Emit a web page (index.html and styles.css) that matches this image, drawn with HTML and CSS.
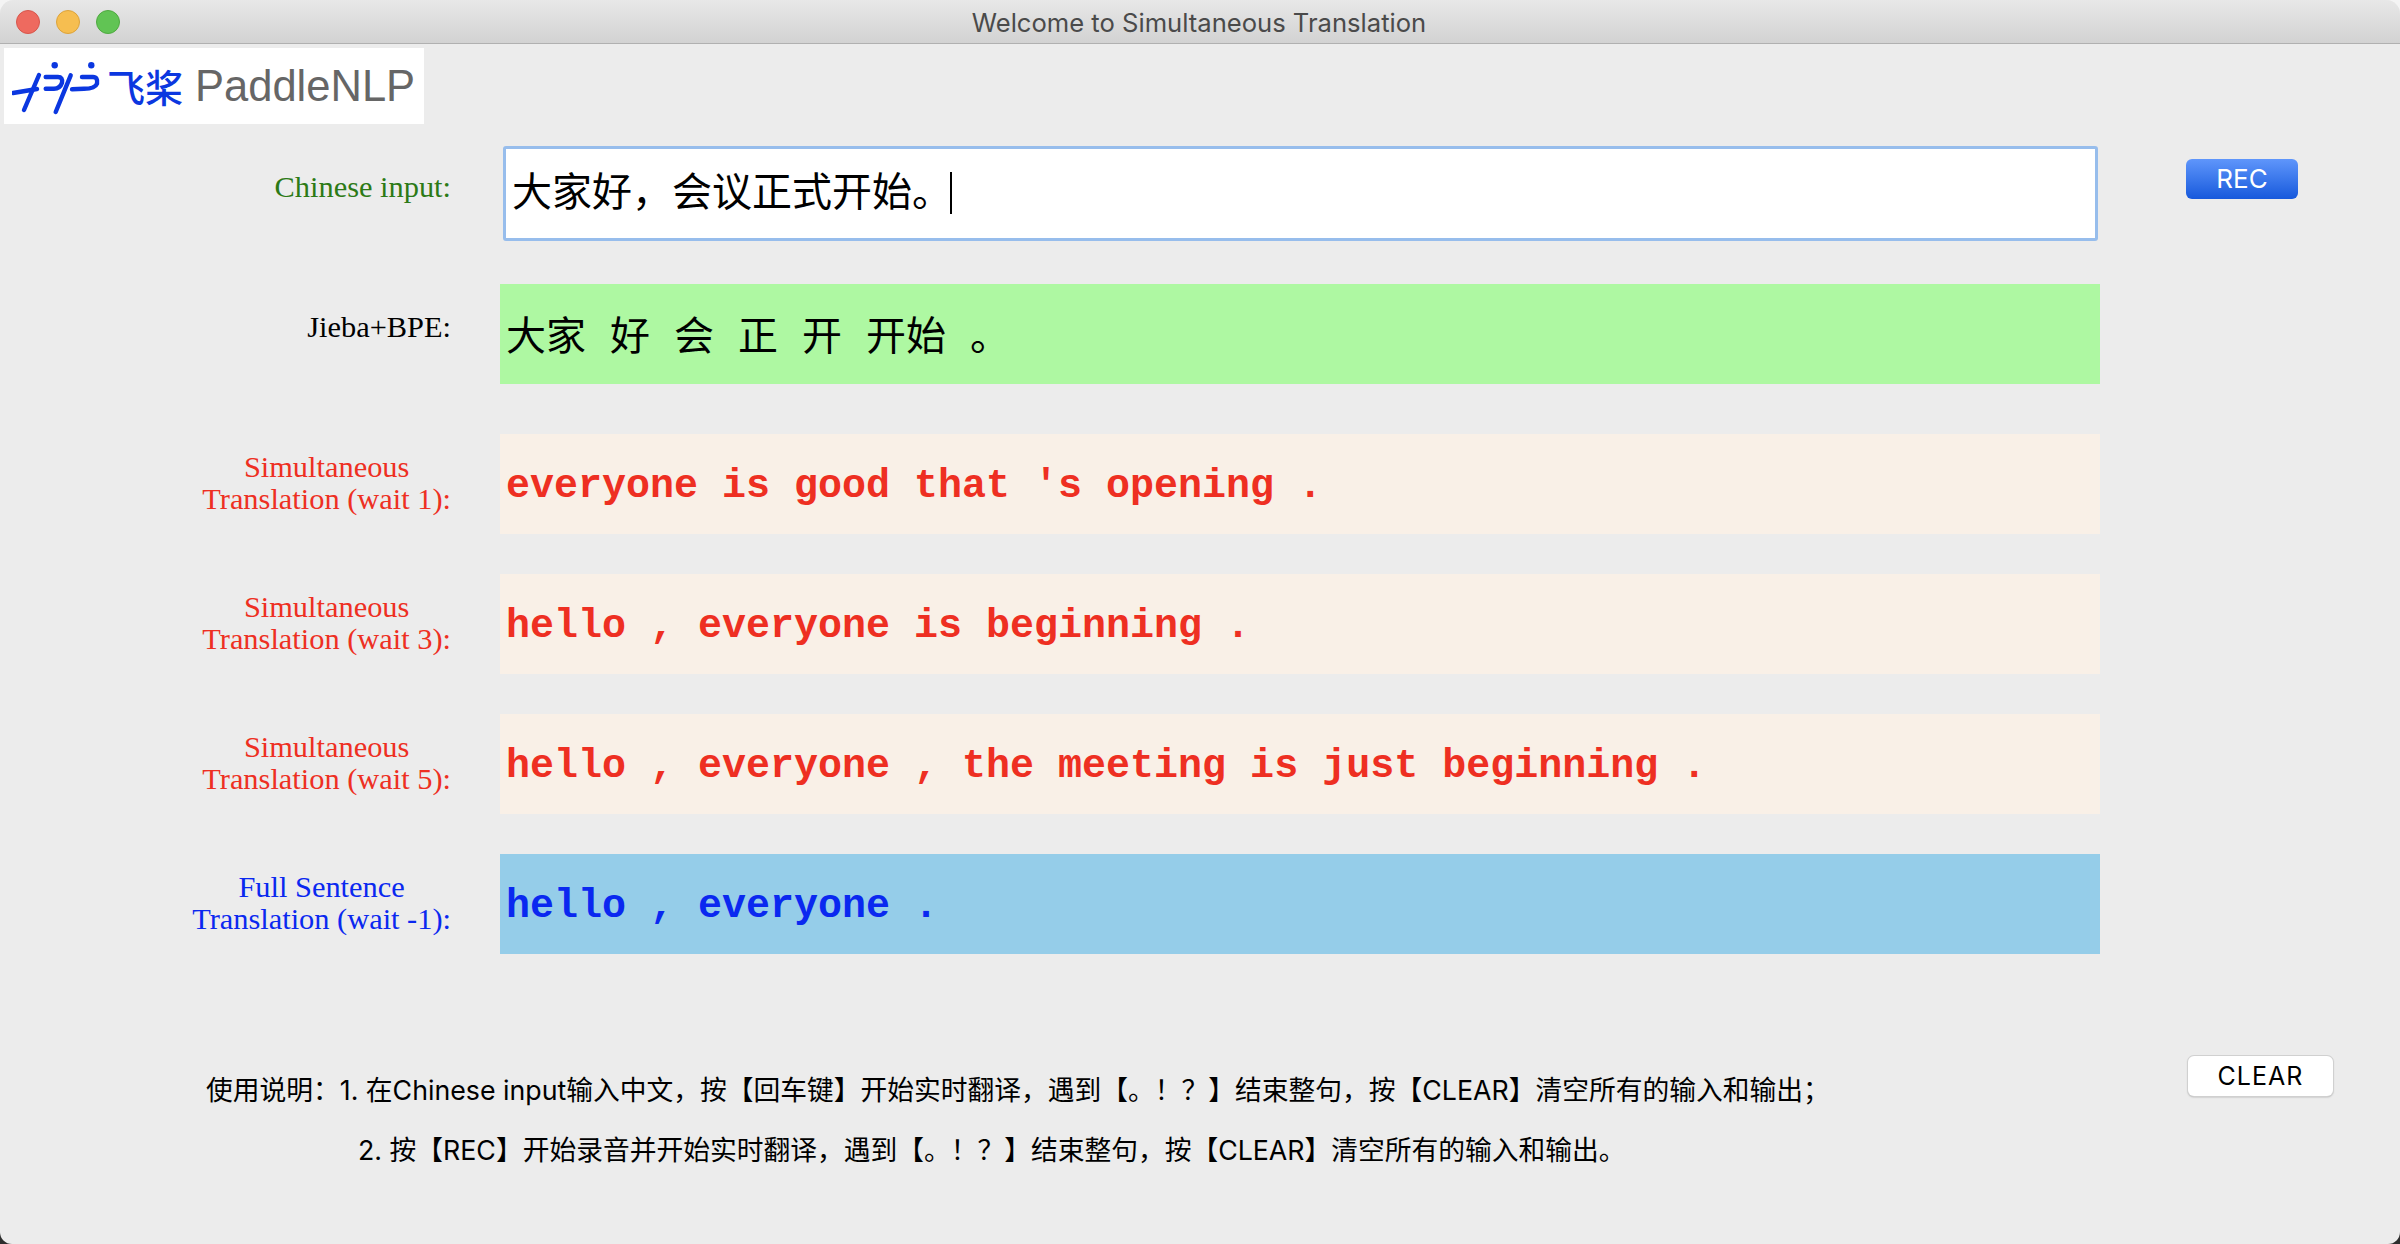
FILE: index.html
```html
<!DOCTYPE html>
<html lang="zh">
<head>
<meta charset="utf-8">
<title>Welcome to Simultaneous Translation</title>
<link rel="stylesheet" href="styles.css">
</head>
<body>
<div class="window">
  <header class="titlebar">
    <div class="lights">
      <span class="light red"></span>
      <span class="light yellow"></span>
      <span class="light green"></span>
    </div>
    <div class="title">Welcome to Simultaneous Translation</div>
  </header>
  <div class="logo">
    <svg class="mark" viewBox="0 0 90 56" width="90" height="56" fill="none" stroke="#0b37e0" stroke-width="4.4" stroke-linecap="round" stroke-linejoin="round">
      <path d="M1 33 L25 29"/>
      <path d="M27 15 L12 50"/>
      <circle cx="42.7" cy="5.3" r="3.2" fill="#0b37e0" stroke="none"/>
      <path d="M33.7 17 H46 Q51 17 50 22.7 Q48 28.7 42 28.7 H33.7"/>
      <path d="M58.7 15.3 L43.7 52"/>
      <circle cx="79.3" cy="5.3" r="3.2" fill="#0b37e0" stroke="none"/>
      <path d="M70 17 H81 Q86 17 85 23.7 Q83 28.7 72 28.7 L60 29.3"/>
    </svg>
    <span class="logo-cn">飞桨</span>
    <span class="logo-en">PaddleNLP</span>
  </div>
  <main class="form">
    <div class="row row-input">
      <label class="label green-text">Chinese input:</label>
      <div class="input"><span>大家好，会议正式开始。</span><i class="caret"></i></div>
      <button class="btn btn-rec">REC</button>
    </div>
    <div class="row row-seg">
      <label class="label">Jieba+BPE:</label>
      <div class="box box-green">大家 好 会 正 开 开始 。</div>
    </div>
    <div class="row">
      <label class="label red-text">Simultaneous<br>Translation (wait 1):</label>
      <div class="box box-peach mono">everyone is good that 's opening .</div>
    </div>
    <div class="row">
      <label class="label red-text">Simultaneous<br>Translation (wait 3):</label>
      <div class="box box-peach mono">hello , everyone is beginning .</div>
    </div>
    <div class="row">
      <label class="label red-text">Simultaneous<br>Translation (wait 5):</label>
      <div class="box box-peach mono">hello , everyone , the meeting is just beginning .</div>
    </div>
    <div class="row">
      <label class="label blue-text">Full Sentence<br>Translation (wait -1):</label>
      <div class="box box-blue mono">hello , everyone .</div>
    </div>
  </main>
  <footer class="help">
    <div class="help-text">
      <p class="help-one">使用说明：1. 在Chinese input输入中文，按【回车键】开始实时翻译，遇到【。！？】结束整句，按【CLEAR】清空所有的输入和输出；</p>
      <p class="help-two">2. 按【REC】开始录音并开始实时翻译，遇到【。！？】结束整句，按【CLEAR】清空所有的输入和输出。</p>
    </div>
    <button class="btn btn-clear">CLEAR</button>
  </footer>
</div>
</body>
</html>
```
FILE: styles.css
```css
* { box-sizing: border-box; }
html, body { margin: 0; height: 100%; }
body { width: 2400px; height: 1244px; overflow: hidden; background: linear-gradient(#f4f4f4 0 50%, #2e2e2e 50%); }
.window {
  width: 2400px; height: 1244px;
  background: #ececec;
  border-radius: 14px 14px 12px 12px;
  overflow: hidden;
  display: flex; flex-direction: column;
}
.titlebar {
  height: 44px; flex: none;
  background: linear-gradient(#e8e8e8, #d2d2d2);
  border-bottom: 1px solid #b0b0b0;
  display: flex; align-items: center;
  position: relative;
}
.lights { display: flex; gap: 16px; padding-left: 16px; }
.light { width: 24px; height: 24px; border-radius: 50%; display: block; }
.red { background: #ee6a5f; border: 1px solid #d7564c; }
.yellow { background: #f6be50; border: 1px solid #dca33b; }
.green { background: #61c454; border: 1px solid #4fa940; }
.title {
  flex: 1; text-align: center; margin-left: -122px; padding-top: 2px;
  font: 25.6px Inter, "Liberation Sans", Arial, sans-serif; color: #4a4a4a;
}
.logo {
  margin: 4px 0 0 4px; width: 420px; height: 76px; flex: none;
  background: #fff; display: flex; align-items: center; padding-left: 8px;
}
.mark { flex: none; margin-top: 4px; }
.logo-cn { font: 500 38px "Noto Sans CJK SC", sans-serif; color: #0b37e0; margin-left: 5px; line-height: 1; }
.logo-en { font: 43.5px "Liberation Sans", Arial, sans-serif; color: #666; margin-left: 12px; line-height: 1; padding-top: 2px; }
.form { display: flex; flex-direction: column; gap: 40px; margin-top: 22px; flex: none; }
.row { display: flex; align-items: center; height: 100px; position: relative; }
.row-input { margin-bottom: 3px; height: 95px; }
.row-seg { margin-bottom: 10px; }
.label {
  width: 451px; flex: none;
  font: 30.4px/32px "Liberation Serif", "Times New Roman", serif; color: #000;
  display: flex; justify-content: flex-end; text-align: center;
  margin-right: 49px;
}
.green-text { color: #2c7a16; margin-top: -14px; }
.red-text { color: #ee2f22; margin-top: -3px; }
.blue-text { color: #0a28f0; margin-top: -3px; }
.row-seg .label { margin-top: -14px; }
.box {
  width: 1600px; height: 100px; flex: none;
  display: flex; align-items: center; padding-left: 6px;
  font-size: 40px; color: #000; white-space: pre;
}
.box-green { background: #aef8a2; font-family: "Liberation Mono", "Noto Sans CJK SC", monospace; padding-bottom: 2px; }
.box-peach { background: #f9f0e7; color: #ee2f22; }
.box-blue { background: #95cde9; color: #0a28f0; }
.mono { font-family: "Liberation Mono", "Courier New", monospace; font-weight: 700; padding-top: 4px; }
.input {
  width: 1595px; height: 95px; flex: none; margin-left: 3px;
  background: #fff; border: 3px solid #97bdec; border-radius: 3px;
  display: flex; align-items: center; padding: 0 0 10px 6px;
  font: 40px "Noto Sans CJK SC", sans-serif; color: #000;
}
.caret { display: block; width: 2px; height: 42px; background: #000; margin-left: -2px; margin-top: 8px; }
.btn { font-family: Inter, "Liberation Sans", sans-serif; border: 0; padding: 0; display: block; }
.btn-rec {
  width: 112px; height: 40px; margin-left: 88px; margin-top: -30px; flex: none;
  border-radius: 6px; color: #fff; font-size: 26px;
  background: linear-gradient(#5f96fb, #1759dc);
}
.btn-clear {
  width: 145px; height: 40px; flex: none;
  background: #fff; border-radius: 6px; color: #000; font-size: 25px; letter-spacing: 1px;
  box-shadow: 0 0 0 1px #d0d0d0, 0 1px 2px #999;
  margin-top: -4px;
}
.help { display: flex; justify-content: space-between; padding: 106px 67px 0 206px; flex: none; }
.help-text { font: 26.75px Inter, "Noto Sans CJK SC", sans-serif; color: #000; white-space: nowrap; }
.help-text p { margin: 0; line-height: 60px; }
.help-two { padding-left: 152px; }
```
